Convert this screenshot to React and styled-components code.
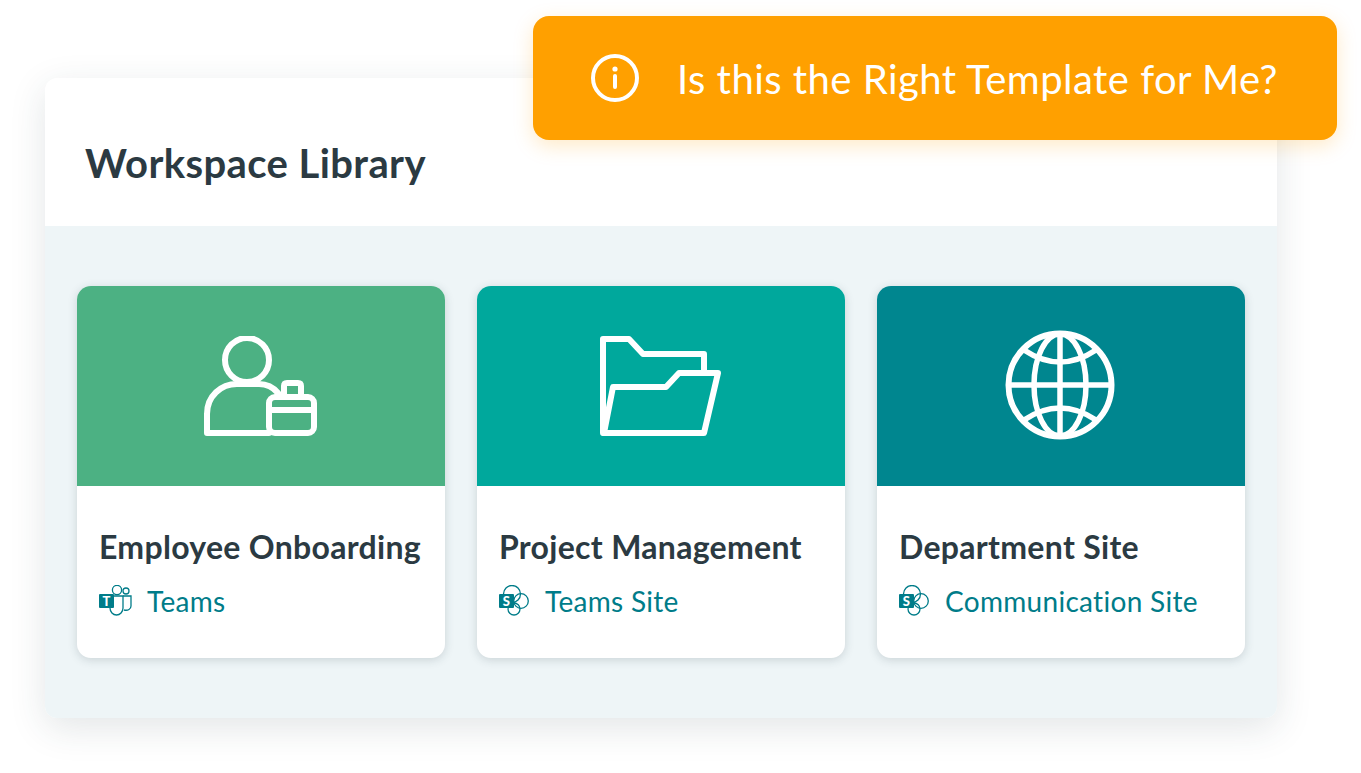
import React from "react";
import styled, { createGlobalStyle } from "styled-components";

const Global = createGlobalStyle`
  html, body { margin: 0; background: #fff; }
  body {
    font-family: Lato, "Open Sans", sans-serif;
    font-variant-ligatures: none;
    overflow: hidden;
  }
`;

const Page = styled.div`
  position: relative;
  width: 1361px;
  height: 773px;
  padding: 78px 0 0 45px;
  box-sizing: border-box;
`;

const Panel = styled.section`
  width: 1232px;
  height: 640px;
  display: flex;
  flex-direction: column;
  border-radius: 12px;
  overflow: hidden;
  background: #fff;
  box-shadow: 0 10px 36px rgba(40, 60, 70, 0.13);
`;

const Header = styled.header`
  height: 148px;
  flex: none;
  display: flex;
  align-items: center;
  padding: 0 40px;
  box-sizing: border-box;
`;

const Title = styled.h1`
  margin: 22px 0 0;
  font-size: 40px;
  font-weight: 700;
  letter-spacing: 0.4px;
  color: #2b3a42;
`;

const Body = styled.div`
  flex: 1;
  display: grid;
  grid-template-columns: repeat(3, 368px);
  gap: 32px;
  padding: 60px 32px;
  background: #eef5f7;
`;

const Card = styled.article`
  height: 372px;
  border-radius: 14px;
  overflow: hidden;
  background: #fff;
  box-shadow: 0 2px 10px rgba(40, 60, 70, 0.18);
`;

const Banner = styled.div`
  height: 200px;
  display: flex;
  align-items: center;
  justify-content: center;
  background: ${props => props.color};
`;

const CardBody = styled.div`
  padding: 39px 22px 0;
`;

const CardTitle = styled.h2`
  margin: 0;
  font-size: 32px;
  line-height: 44px;
  font-weight: 700;
  letter-spacing: 0.3px;
  color: #2b3a42;
  white-space: nowrap;
`;

const Meta = styled.div`
  display: flex;
  align-items: center;
  gap: 14px;
  margin-top: 14px;
  font-size: 28px;
  line-height: 36px;
  letter-spacing: 0.3px;
  color: #007c89;
`;

const Logo = styled.svg`
  flex: none;
  width: 34px;
  height: 32px;
  margin-right: ${props => props.$trim}px;
`;

const LogoLetter = styled.text`
  font-family: Lato, sans-serif;
  font-size: 13px;
  font-weight: 900;
  fill: #fff;
`;

const Toast = styled.div`
  position: absolute;
  left: 533px;
  top: 16px;
  width: 804px;
  height: 124px;
  display: flex;
  align-items: center;
  gap: 38px;
  padding-left: 58px;
  box-sizing: border-box;
  border-radius: 16px;
  background: #ffa000;
  color: #fff;
  font-size: 40px;
  letter-spacing: 0.47px;
  box-shadow: 0 6px 20px rgba(255, 160, 0, 0.22);
`;

const ToastText = styled.span`
  margin-top: 2px;
`;

const PersonIcon = () => (
  <svg width="116" height="100" viewBox="0 0 116 100" fill="none" stroke="#fff" strokeWidth="6" strokeLinejoin="round" strokeLinecap="round">
    <circle cx="44" cy="24" r="22" />
    <path d="M66 97H4V78C4 60 18 48 34 48H56C64 48 70 51 75 57" />
    <rect x="66" y="61" width="45" height="36" rx="6" />
    <path d="M66 74H111" />
    <path d="M81 61V50C81 48 82 47 84 47H95C97 47 98 48 98 50V61" />
  </svg>
);

const FolderIcon = () => (
  <svg width="124" height="104" viewBox="0 0 124 104" fill="none" stroke="#fff" strokeWidth="6" strokeLinejoin="round" strokeLinecap="round">
    <path d="M4 99V5H30L44 20H105V39" />
    <path d="M5 99L14 53H67L80 39H119L105 99Z" />
  </svg>
);

const GlobeIcon = () => (
  <svg width="112" height="112" viewBox="1 1 112 112" fill="none" stroke="#fff" strokeWidth="5.5">
    <circle cx="56" cy="56" r="51.500" strokeWidth="6" />
    <path d="M56 4V108M4 56H108" />
    <ellipse cx="56" cy="56" rx="26" ry="51" />
    <path d="M20 21Q56 45 92 21M20 91Q56 67 92 91" />
  </svg>
);

const InfoIcon = () => (
  <svg width="48" height="48" viewBox="0 0 48 48" fill="none" stroke="#fff" strokeWidth="4" strokeLinecap="round">
    <circle cx="24" cy="24" r="22" />
    <path d="M24 22V33" />
    <circle cx="24" cy="15" r="2.600" fill="#fff" stroke="none" />
  </svg>
);

const TeamsIcon = () => (
  <Logo viewBox="0 0 34 32" fill="none" stroke="#007c89" strokeWidth="1.3" $trim={0}>
    <circle cx="18" cy="5" r="4.600" />
    <circle cx="27" cy="6" r="3" />
    <path d="M11 11H24V23C24 27 21 30 17.500 30C14 30 11 27 11 23" />
    <path d="M24 11H32V21C32 24 29 26 25 25" />
    <rect x="0" y="9" width="15" height="14" rx="1" fill="#007c89" stroke="none" />
    <LogoLetter x="7.500" y="20.500" textAnchor="middle" stroke="none">T</LogoLetter>
  </Logo>
);

const SharePointIcon = () => (
  <Logo viewBox="0 0 34 32" fill="none" stroke="#007c89" strokeWidth="1.3" $trim={-2}>
    <circle cx="13" cy="9" r="8.500" />
    <circle cx="22" cy="16" r="7.300" />
    <circle cx="15" cy="24" r="6" />
    <rect x="0" y="9" width="15" height="14" rx="1" fill="#007c89" stroke="none" />
    <LogoLetter x="7.500" y="20.500" textAnchor="middle" stroke="none">S</LogoLetter>
  </Logo>
);

const templates = [
  { title: "Employee Onboarding", kind: "Teams", color: "#4cb183", icon: <PersonIcon />, logo: <TeamsIcon /> },
  { title: "Project Management", kind: "Teams Site", color: "#00a89c", icon: <FolderIcon />, logo: <SharePointIcon /> },
  { title: "Department Site", kind: "Communication Site", color: "#00868f", icon: <GlobeIcon />, logo: <SharePointIcon /> },
];

export default function App() {
  return (
    <Page>
      <Global />
      <Panel>
        <Header>
          <Title>Workspace Library</Title>
        </Header>
        <Body>
          {templates.map(t => (
            <Card key={t.title}>
              <Banner color={t.color}>{t.icon}</Banner>
              <CardBody>
                <CardTitle>{t.title}</CardTitle>
                <Meta>
                  {t.logo}
                  {t.kind}
                </Meta>
              </CardBody>
            </Card>
          ))}
        </Body>
      </Panel>
      <Toast>
        <InfoIcon />
        <ToastText>Is this the Right Template for Me?</ToastText>
      </Toast>
    </Page>
  );
}
